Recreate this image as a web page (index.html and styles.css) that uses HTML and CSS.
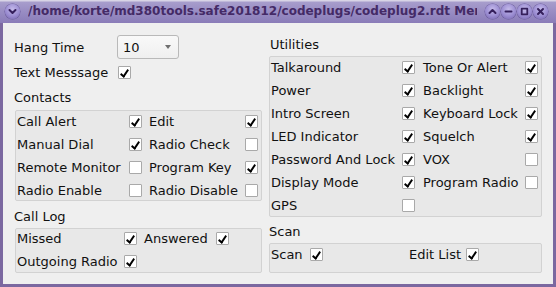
FILE: index.html
```html
<!DOCTYPE html>
<html>
<head>
<meta charset="utf-8">
<link rel="stylesheet" href="styles.css">
</head>
<body>
<div class="window">
  <div class="titlebar">
    <span class="tbtn"><svg viewBox="0 0 15 15"><polyline points="4.5,6 7.5,9 10.5,6"/></svg></span>
    <span class="title">/home/korte/md380tools.safe201812/codeplugs/codeplug2.rdt Menu</span>
    <span class="tbtns">
      <span class="tbtn"><svg viewBox="0 0 15 15"><polyline points="4.5,9 7.5,6 10.5,9"/></svg></span>
      <span class="tbtn"><svg viewBox="0 0 15 15"><line x1="4.5" y1="7.5" x2="10.5" y2="7.5"/></svg></span>
      <span class="tbtn"><svg viewBox="0 0 15 15"><rect x="4.7" y="4.7" width="5.6" height="5.6" class="thin"/></svg></span>
      <span class="tbtn"><svg viewBox="0 0 15 15"><line x1="5" y1="5" x2="10" y2="10"/><line x1="10" y1="5" x2="5" y2="10"/></svg></span>
    </span>
  </div>
  <div class="content">
    <div class="col left">
      <div class="row-hang">
        <span class="flabel">Hang Time</span>
        <div class="combo"><span>10</span><span class="arrow"></span></div>
      </div>
      <div class="row-text">
        <span class="flabel">Text Messsage</span>
        <span class="cb on"></span>
      </div>
      <div class="sec-label sl-contacts">Contacts</div>
      <div class="group contacts">
        <span>Call Alert</span><span class="cb on"></span><span></span><span>Edit</span><span class="cb on"></span>
        <span>Manual Dial</span><span class="cb on"></span><span></span><span>Radio Check</span><span class="cb"></span>
        <span>Remote Monitor</span><span class="cb"></span><span></span><span>Program Key</span><span class="cb on"></span>
        <span>Radio Enable</span><span class="cb"></span><span></span><span>Radio Disable</span><span class="cb"></span>
      </div>
      <div class="sec-label sl-calllog">Call Log</div>
      <div class="group calllog">
        <span>Missed</span><span class="cb on"></span><span></span><span>Answered</span><span class="cb on"></span>
        <span>Outgoing Radio</span><span class="cb on"></span><span></span><span></span><span></span>
      </div>
    </div>
    <div class="col right">
      <div class="sec-label sl-util">Utilities</div>
      <div class="group util">
        <span>Talkaround</span><span class="cb on"></span><span></span><span>Tone Or Alert</span><span class="cb on"></span>
        <span>Power</span><span class="cb on"></span><span></span><span>Backlight</span><span class="cb on"></span>
        <span>Intro Screen</span><span class="cb on"></span><span></span><span>Keyboard Lock</span><span class="cb on"></span>
        <span>LED Indicator</span><span class="cb on"></span><span></span><span>Squelch</span><span class="cb on"></span>
        <span>Password And Lock</span><span class="cb on"></span><span></span><span>VOX</span><span class="cb"></span>
        <span>Display Mode</span><span class="cb on"></span><span></span><span>Program Radio</span><span class="cb"></span>
        <span>GPS</span><span class="cb"></span><span></span><span></span><span></span>
      </div>
      <div class="sec-label sl-scan">Scan</div>
      <div class="group scan">
        <span>Scan</span><span class="cb on"></span><span></span><span>Edit List</span><span class="cb on"></span>
      </div>
    </div>
  </div>
</div>
</body>
</html>
```
FILE: styles.css
```css
html, body {
  margin: 0;
  padding: 0;
  background: #7b68a0;
}
body {
  width: 556px;
  height: 287px;
  overflow: hidden;
  font-family: "DejaVu Sans", sans-serif;
  font-size: 13px;
  color: #111;
}
.window {
  width: 556px;
  height: 287px;
  box-sizing: border-box;
  background: #7b68a0;
  display: flex;
  flex-direction: column;
}
.titlebar {
  height: 23px;
  flex: none;
  display: flex;
  align-items: center;
  padding-left: 5px;
  padding-right: 8px;
  box-sizing: border-box;
  background: linear-gradient(#d8d4e6 0px, #d8d4e6 1px, #a79dcc 2px, #988cc3 12px, #8a7cb8 23px);
}
.title {
  margin-left: 8px;
  flex: 1;
  min-width: 0;
  overflow: hidden;
  white-space: nowrap;
  font-weight: bold;
  font-size: 12px;
  color: #442a66;
  margin-right: 8px;
  line-height: 23px;
}
.tbtns {
  display: flex;
  gap: 1px;
}
.tbtn {
  width: 15px;
  height: 15px;
  border-radius: 50%;
  box-sizing: border-box;
  background: radial-gradient(circle at 50% 35%, #c4baea 0%, #9b8dd2 55%, #7564ad 100%);
  box-shadow: 0 0 0 0.5px #6b5b9e;
  flex: none;
  display: block;
}
.tbtn svg {
  display: block;
  width: 15px;
  height: 15px;
  fill: none;
  stroke: #35205c;
  stroke-width: 2;
  stroke-linecap: round;
  stroke-linejoin: round;
}
.tbtn svg .thin {
  stroke-width: 1.8;
  stroke-linecap: butt;
}
.content {
  flex: 1;
  margin: 0 3px 3px 3px;
  background: #efefef;
  display: flex;
  padding: 12px 11px 0 11px;
  gap: 7px;
  box-sizing: border-box;
}
.col {
  display: flex;
  flex-direction: column;
}
.left { width: 248px; }
.right { width: 273px; }

.row-hang {
  height: 24px;
  display: flex;
  align-items: center;
}
.row-hang .flabel { width: 103px; }
.row-text {
  margin-top: 3px;
  height: 21px;
  display: flex;
  align-items: center;
}
.row-text .flabel { width: 104px; }

.combo {
  width: 62px;
  height: 24px;
  box-sizing: border-box;
  border: 1px solid #b9b9b9;
  border-radius: 3px;
  background: linear-gradient(#f9f9f9, #efefef);
  display: flex;
  align-items: center;
  justify-content: space-between;
  padding: 0 7px 0 5px;
}
.arrow {
  width: 0;
  height: 0;
  border-left: 3px solid transparent;
  border-right: 3px solid transparent;
  border-top: 4px solid #6f6f6f;
}

.sl-contacts { margin-top: 5px; height: 20px; line-height: 20px; margin-bottom: 2px; }
.sl-calllog { margin-top: 5px; height: 21px; line-height: 21px; margin-bottom: 1px; }
.sl-util { height: 19px; line-height: 19px; margin-bottom: 2px; padding-left: 1px; }
.sl-scan { margin-top: 5px; height: 19px; line-height: 19px; margin-bottom: 2px; }

.group {
  box-sizing: border-box;
  border: 1px solid #d2d2d2;
  border-radius: 2px;
  background: #e8e8e8;
  display: grid;
  align-items: center;
}
.group > span { white-space: nowrap; }

.contacts {
  margin-left: 1px;
  width: 247px;
  padding: 0 3px 0 1px;
  grid-template-columns: 112px 13px 7px 96px 13px;
  grid-auto-rows: 20px;
  row-gap: 3px;
}
.calllog {
  margin-left: 1px;
  width: 247px;
  padding: 0 3px 1px 1px;
  grid-template-columns: 107px 13px 7px 72px 13px;
  grid-auto-rows: 19px;
  row-gap: 4px;
}
.util {
  width: 273px;
  padding: 0 3px 0 1px;
  grid-template-columns: 131px 13px 8px 102px 13px;
  grid-auto-rows: 21px;
  row-gap: 2px;
}
.scan {
  width: 273px;
  padding: 0 3px 8px 1px;
  grid-template-columns: 39px 13px 86px 57px 13px;
  grid-auto-rows: 20px;
}

.cb {
  width: 13px;
  height: 13px;
  box-sizing: border-box;
  border: 1px solid #a9a9a9;
  border-radius: 1px;
  background: #fff;
  display: block;
  position: relative;
}
.cb.on::after {
  content: "";
  position: absolute;
  left: 3px;
  top: 1px;
  width: 3px;
  height: 7px;
  border-right: 2px solid #000;
  border-bottom: 2px solid #000;
  transform: rotate(40deg) skewX(6deg);
  transform-origin: center;
}
```
